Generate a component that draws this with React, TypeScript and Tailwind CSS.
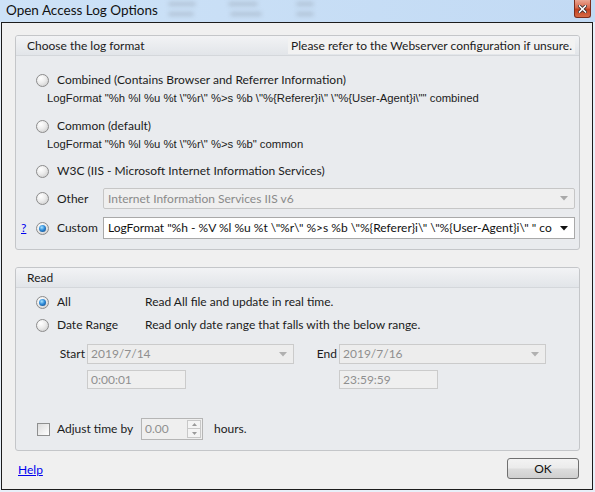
import React from "react";

function Radio({ checked }: { checked?: boolean }) {
  return (
    <span className="w-[13px] h-[13px] rounded-full border border-[#8c8c8c] bg-[radial-gradient(circle_at_35%_30%,#ffffff_0%,#ececec_45%,#c6c6c6_100%)] flex items-center justify-center shrink-0">
      {checked && (
        <span className="w-[7px] h-[7px] rounded-full bg-[radial-gradient(circle_at_40%_35%,#a8e4ff_0%,#2f8bd9_45%,#0d3c75_100%)]" />
      )}
    </span>
  );
}

function Arrow({ color }: { color: string }) {
  return (
    <svg width="8" height="5" viewBox="0 0 8 5" className="shrink-0">
      <path d="M0 0H8L4 4.5Z" fill={color} />
    </svg>
  );
}

export default function App() {
  return (
    <div className="w-[595px] h-[492px] bg-[#e8f0f9] flex flex-col overflow-hidden font-['Lato','Noto_Sans',sans-serif]">
      {/* Title bar */}
      <div className="h-[22px] relative flex items-start bg-[linear-gradient(to_right,#cde2f7,#c2daf4)]">
        <div className="absolute left-[168px] top-[2px] w-[28px] h-[4px] rounded-full bg-[#9aa7b6] opacity-50 blur-[2px]" />
        <div className="absolute left-[168px] top-[12px] w-[26px] h-[4px] rounded-full bg-[#9aa7b6] opacity-50 blur-[2px]" />
        <div className="absolute left-[228px] top-[2px] w-[30px] h-[4px] rounded-full bg-[#9aa7b6] opacity-50 blur-[2px]" />
        <div className="absolute left-[230px] top-[12px] w-[32px] h-[4px] rounded-full bg-[#9aa7b6] opacity-50 blur-[2px]" />
        <div className="absolute left-[296px] top-[2px] w-[18px] h-[4px] rounded-full bg-[#9aa7b6] opacity-50 blur-[2px]" />
        <div className="absolute left-[296px] top-[12px] w-[18px] h-[4px] rounded-full bg-[#9aa7b6] opacity-50 blur-[2px]" />
        <span className="relative ml-[6px] mt-[1px] text-[13.5px] leading-[18px] text-[#111]">
          Open Access Log Options
        </span>
        <div className="flex-1" />
        <div className="relative mr-[4px] w-[17px] h-[18px] rounded-b-[3px] border border-t-0 border-[#7d2d1c] bg-[linear-gradient(to_bottom,#eaa592_0%,#d8694c_45%,#c2401f_55%,#d66a46_100%)] flex items-center justify-center">
          <svg width="9" height="8" viewBox="0 0 9 8">
            <path d="M1.5 1L7.5 7M7.5 1L1.5 7" stroke="#3a2a2a" strokeWidth="3.2" strokeLinecap="square" />
            <path d="M1.5 1L7.5 7M7.5 1L1.5 7" stroke="#ffffff" strokeWidth="1.6" strokeLinecap="square" />
          </svg>
        </div>
      </div>

      {/* Client area */}
      <div className="ml-[1px] w-[592px] h-[468px] border border-[#1c1c1c] bg-[#f0f0f0] flex flex-col text-[12px] text-[#1b1b1b]">
        {/* Group 1 */}
        <div className="mt-[12px] ml-[13px] w-[565px] h-[215px] border border-[#c4c6c9] rounded-[3px] bg-[#e9ebee] flex flex-col overflow-hidden">
          <div className="h-[20px] shrink-0 border-b border-[#d4d7db] bg-[linear-gradient(to_bottom,#f2f3f5,#e2e5e9)] flex items-center">
            <span className="ml-[11px] leading-[16px]">Choose the log format</span>
            <div className="flex-1" />
            <span className="mr-[4px] px-[3px] bg-[#f2f2f2] leading-[16px]">
              Please refer to the Webserver configuration if unsure.
            </span>
          </div>
          <div className="flex flex-col pt-[16px]">
            <div className="h-[16px] flex items-center pl-[20px]">
              <Radio />
              <span className="ml-[8px] leading-[16px]">Combined (Contains Browser and Referrer Information)</span>
            </div>
            <div className="h-[14px] mt-[3px] pl-[31px] flex items-center font-['Liberation_Sans',sans-serif] text-[11.3px] leading-[14px]">
              {'LogFormat "%h %l %u %t \\"%r\\" %>s %b \\"%{Referer}i\\" \\"%{User-Agent}i\\"" combined'}
            </div>
            <div className="h-[16px] mt-[13px] flex items-center pl-[20px]">
              <Radio />
              <span className="ml-[8px] leading-[16px]">Common (default)</span>
            </div>
            <div className="h-[14px] mt-[3px] pl-[31px] flex items-center font-['Liberation_Sans',sans-serif] text-[11.3px] leading-[14px]">
              {'LogFormat "%h %l %u %t \\"%r\\" %>s %b" common'}
            </div>
            <div className="h-[16px] mt-[12px] flex items-center pl-[20px]">
              <Radio />
              <span className="ml-[8px] leading-[16px]">W3C (IIS - Microsoft Internet Information Services)</span>
            </div>
            <div className="h-[21px] mt-[9px] flex items-center pl-[20px]">
              <Radio />
              <span className="ml-[8px] w-[46px] leading-[16px]">Other</span>
              <div className="w-[472px] h-[21px] border border-[#c6c6c6] rounded-[2px] bg-[#efefef] flex items-center pl-[4px] pr-[6px]">
                <span className="flex-1 text-[#8a8a8a] leading-[16px]">Internet Information Services IIS v6</span>
                <Arrow color="#a9a9a9" />
              </div>
            </div>
            <div className="h-[22px] mt-[8px] flex items-center">
              <span className="w-[20px] pl-[5px] text-[#0000ee] underline leading-[16px]">?</span>
              <Radio checked />
              <span className="ml-[8px] w-[46px] leading-[16px]">Custom</span>
              <div className="w-[472px] h-[22px] border border-[#a9a9a9] bg-white flex items-center pl-[4px] pr-[6px]">
                <span className="flex-1 min-w-0 overflow-hidden whitespace-nowrap leading-[16px] text-[#111]">
                  {'LogFormat "%h - %V %l %u %t \\"%r\\" %>s %b \\"%{Referer}i\\" \\"%{User-Agent}i\\" " combined'}
                </span>
                <span className="w-[8px] shrink-0" />
                <Arrow color="#111111" />
              </div>
            </div>
          </div>
        </div>

        {/* Group 2 */}
        <div className="mt-[17px] ml-[13px] w-[565px] h-[184px] border border-[#c4c6c9] rounded-[3px] bg-[#e9ebee] flex flex-col overflow-hidden">
          <div className="h-[20px] shrink-0 border-b border-[#d4d7db] bg-[linear-gradient(to_bottom,#f2f3f5,#e2e5e9)] flex items-center">
            <span className="ml-[11px] leading-[16px]">Read</span>
          </div>
          <div className="flex flex-col pt-[6px]">
            <div className="h-[16px] flex items-center pl-[20px]">
              <Radio checked />
              <span className="ml-[8px] w-[88px] leading-[16px]">All</span>
              <span className="leading-[16px]">Read All file and update in real time.</span>
            </div>
            <div className="h-[16px] mt-[7px] flex items-center pl-[20px]">
              <Radio />
              <span className="ml-[8px] w-[88px] leading-[16px]">Date Range</span>
              <span className="leading-[16px]">Read only date range that falls with the below range.</span>
            </div>
            <div className="h-[20px] mt-[11px] flex items-center pl-[41px]">
              <span className="w-[30px] pr-[2px] text-right leading-[16px]">Start</span>
              <div className="w-[207px] h-[20px] border border-[#cbcbcb] bg-[#ededed] flex items-center pl-[3px] pr-[6px]">
                <span className="flex-1 text-[#8f8f8f] leading-[16px]">2019/7/14</span>
                <Arrow color="#b0b0b0" />
              </div>
              <span className="w-[45px] pr-[2px] text-right leading-[16px]">End</span>
              <div className="w-[207px] h-[20px] border border-[#cbcbcb] bg-[#ededed] flex items-center pl-[3px] pr-[6px]">
                <span className="flex-1 text-[#8f8f8f] leading-[16px]">2019/7/16</span>
                <Arrow color="#b0b0b0" />
              </div>
            </div>
            <div className="h-[19px] mt-[6px] flex items-center pl-[71px]">
              <div className="w-[99px] h-[19px] border border-[#cbcbcb] bg-[#efefef] flex items-center pl-[3px]">
                <span className="text-[#8f8f8f] leading-[16px]">0:00:01</span>
              </div>
              <div className="w-[153px]" />
              <div className="w-[99px] h-[19px] border border-[#cbcbcb] bg-[#efefef] flex items-center pl-[3px]">
                <span className="text-[#8f8f8f] leading-[16px]">23:59:59</span>
              </div>
            </div>
            <div className="h-[22px] mt-[29px] flex items-center pl-[21px]">
              <span className="w-[13px] h-[13px] border border-[#8e8f8f] bg-[linear-gradient(135deg,#dcdcdc,#ffffff)] shrink-0" />
              <span className="ml-[7px] w-[84px] leading-[16px]">Adjust time by</span>
              <div className="w-[62px] h-[22px] border border-[#b5b5b5] bg-[#efefef] flex items-center pl-[3px] pr-[1px]">
                <span className="flex-1 text-[#8f8f8f] leading-[16px]">0.00</span>
                <div className="w-[14px] h-[18px] flex flex-col">
                  <div className="h-[9px] border border-[#c8c8c8] bg-[#f4f4f4] flex items-center justify-center">
                    <svg width="5" height="3" viewBox="0 0 5 3"><path d="M0 3H5L2.5 0Z" fill="#9a9a9a" /></svg>
                  </div>
                  <div className="h-[9px] border border-t-0 border-[#c8c8c8] bg-[#f4f4f4] flex items-center justify-center">
                    <svg width="5" height="3" viewBox="0 0 5 3"><path d="M0 0H5L2.5 3Z" fill="#9a9a9a" /></svg>
                  </div>
                </div>
              </div>
              <span className="ml-[11px] leading-[16px]">hours.</span>
            </div>
          </div>
        </div>

        {/* Bottom row */}
        <div className="flex items-start pl-[16px]">
          <span className="mt-[11px] text-[#0000ee] underline leading-[16px]">Help</span>
          <div className="flex-1" />
          <button className="mt-[7px] mr-[13px] w-[72px] h-[21px] rounded-[3px] border border-[#707070] bg-[linear-gradient(to_bottom,#f3f3f3_0%,#ebebeb_48%,#dddddd_52%,#cfcfcf_100%)] flex items-center justify-center text-[12px] text-[#111] leading-[16px]">
            OK
          </button>
        </div>
      </div>
    </div>
  );
}
